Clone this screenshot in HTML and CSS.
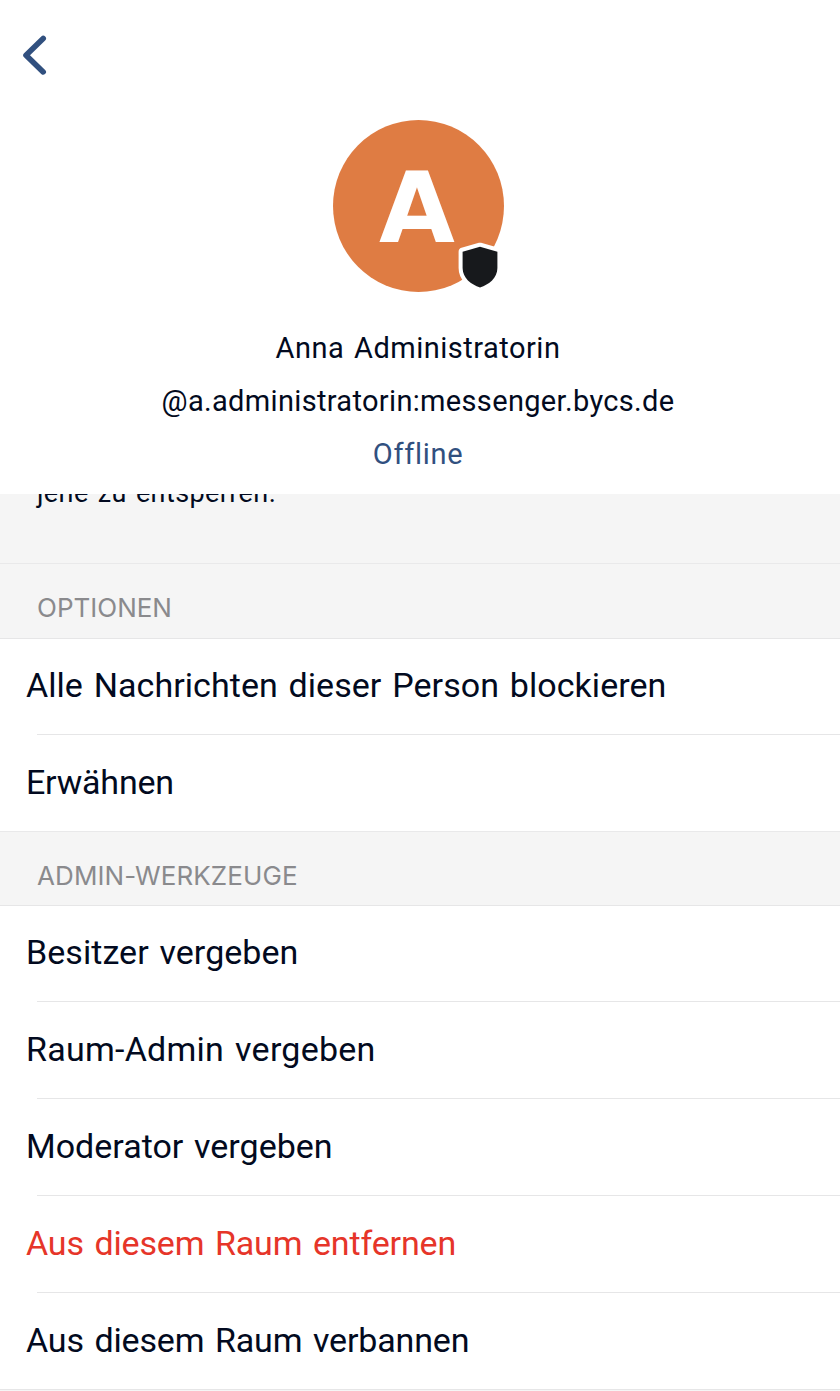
FILE: index.html
```html
<!DOCTYPE html>
<html lang="de">
<head>
  <meta charset="UTF-8">
  <meta name="viewport" content="width=device-width, initial-scale=1.0">
  <title>Anna Administratorin</title>
  <link rel="stylesheet" href="styles.css">
</head>
<body>
  <div class="screen">
    <header class="profile">
      <button class="back" type="button" aria-label="Zurück">
        <svg width="26" height="42" viewBox="0 0 26 42">
          <path d="M22.200 4.500 L5 21.200 L22.200 37.900" fill="none" stroke="#31507f" stroke-width="5.600" stroke-linecap="round" stroke-linejoin="round"/>
        </svg>
      </button>
      <div class="avatar">
        <span class="avatar-letter">A</span>
        <svg class="badge" width="44" height="50" viewBox="0 0 44 50">
          <path d="M22 4.700 L39.400 9.700 V26 C39.400 36 31 42.500 22 45.500 C13 42.500 4.600 36 4.600 26 V9.700 Z" fill="none" stroke="#fff" stroke-width="8" stroke-linejoin="round"/>
          <path d="M22 4.700 L39.400 9.700 V26 C39.400 36 31 42.500 22 45.500 C13 42.500 4.600 36 4.600 26 V9.700 Z" fill="#17191c"/>
        </svg>
      </div>
      <div class="name">Anna Administratorin</div>
      <div class="user-id">@a.administratorin:messenger.bycs.de</div>
      <div class="status">Offline</div>
    </header>

    <main>
      <div class="note"><p>jene zu entsperren.</p></div>

      <h2 class="section-title">OPTIONEN</h2>
      <ul class="list">
        <li class="first">Alle Nachrichten dieser Person blockieren</li>
        <li class="mention">Erwähnen</li>
      </ul>

      <h2 class="section-title admin">ADMIN-WERKZEUGE</h2>
      <ul class="list admin-list">
        <li class="first">Besitzer vergeben</li>
        <li class="room-admin">Raum-Admin vergeben</li>
        <li>Moderator vergeben</li>
        <li class="remove">Aus diesem Raum entfernen</li>
        <li class="ban">Aus diesem Raum verbannen</li>
      </ul>
    </main>
  </div>
</body>
</html>
```
FILE: styles.css
```css
* {
  box-sizing: border-box;
}

body {
  margin: 0;
  background-color: #f5f5f5;
  color: #020a20;
  font-family: Roboto, sans-serif;
  font-variant-ligatures: none;
}

.screen {
  height: 1391px;
  overflow: hidden;
}

.profile {
  display: flex;
  flex-direction: column;
  align-items: center;
  height: 494px;
  background-color: #fff;
  font-size: 29px;
  line-height: 53px;
}

.back {
  align-self: flex-start;
  height: 42px;
  margin: 34px 0 44px 21px;
  padding: 0;
  border: none;
  background: none;
}

.back svg {
  display: block;
}

.avatar {
  position: relative;
  display: flex;
  justify-content: center;
  align-items: center;
  width: 171px;
  height: 172px;
  margin: 0 3px 30px 0;
  border-radius: 50%;
  background-color: #df7c43;
}

.avatar-letter {
  padding: 3px 3px 0 0;
  color: #fff;
  font-family: "DejaVu Sans", sans-serif;
  font-size: 98px;
  font-weight: 700;
  line-height: 1;
}

.badge {
  position: absolute;
  left: 125px;
  top: 122px;
  overflow: hidden;
}

.name,
.user-id,
.status {
  margin-right: 4px;
  white-space: nowrap;
}

.name {
  letter-spacing: 0.5px;
  word-spacing: 2px;
}

.user-id {
  letter-spacing: 0.33px;
}

.status {
  color: #31507f;
  letter-spacing: 0.7px;
}

.note {
  height: 69px;
  padding-left: 37px;
  background-color: #f5f5f5;
  overflow: hidden;
}

.note p {
  margin: -19px 0 0;
  font-size: 27px;
  letter-spacing: 0.4px;
  word-spacing: 2px;
  line-height: 36px;
}

.section-title {
  height: 76px;
  margin: 0;
  padding: 17px 37px 0;
  border-top: 1px solid #e9e9ea;
  border-bottom: 1px solid #e6e6e7;
  background-color: #f5f5f5;
  color: #8a8a8d;
  font-family: Inter, sans-serif;
  font-size: 26px;
  font-weight: 400;
  line-height: 54px;
}

.section-title.admin {
  height: 75px;
  letter-spacing: 0.1px;
}

.list {
  margin: 0;
  padding: 0;
  background-color: #fff;
  list-style: none;
}

.list li {
  position: relative;
  height: 97px;
  padding-left: 26px;
  font-size: 34px;
  line-height: 94px;
  word-spacing: 2.3px;
  white-space: nowrap;
}

.list .first {
  height: 96px;
  letter-spacing: 0.05px;
  line-height: 92px;
}

.list .mention {
  height: 96px;
  letter-spacing: -0.2px;
}

.list .room-admin {
  letter-spacing: 0.25px;
}

.list li:not(:last-child)::after {
  content: "";
  position: absolute;
  left: 37px;
  right: 0;
  bottom: 0;
  height: 1px;
  background-color: #e6e6e7;
}

.admin-list li:last-child {
  border-bottom: 1px solid #e6e6e7;
}

.list .remove {
  color: #e63529;
}

.list .remove,
.list .ban {
  letter-spacing: -0.15px;
}
```
